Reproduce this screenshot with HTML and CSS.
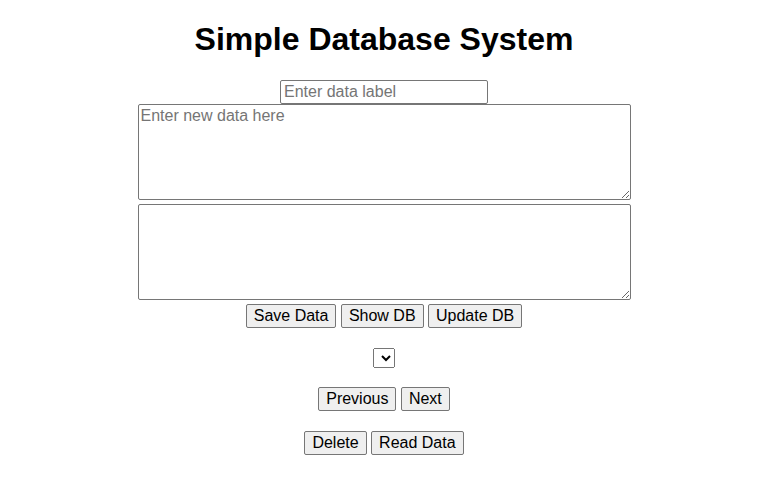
FILE: index.html
```html
<!DOCTYPE html>
<html lang="en">
<head>
<meta charset="utf-8">
<title>Simple Database System</title>
<link rel="stylesheet" href="styles.css">
</head>
<body>
<main class="app">
  <h1 class="title">Simple Database System</h1>
  <input class="label-input" type="text" placeholder="Enter data label">
  <textarea class="data-area" placeholder="Enter new data here"></textarea>
  <textarea class="data-area second"></textarea>
  <div class="row row-actions">
    <button class="btn">Save Data</button>
    <button class="btn">Show DB</button>
    <button class="btn">Update DB</button>
  </div>
  <select class="picker"></select>
  <div class="row row-nav">
    <button class="btn">Previous</button>
    <button class="btn">Next</button>
  </div>
  <div class="row row-edit">
    <button class="btn">Delete</button>
    <button class="btn">Read Data</button>
  </div>
</main>
</body>
</html>
```
FILE: styles.css
```css
html, body {
  margin: 0;
  padding: 0;
  background: #ffffff;
}
body {
  font-family: "Liberation Sans", Arial, sans-serif;
  color: #000000;
}
.app {
  display: flex;
  flex-direction: column;
  align-items: center;
}
.title {
  margin: 21px 0 0;
  font-size: 32px;
  font-weight: bold;
  line-height: 37px;
}
.label-input {
  margin-top: 22px;
  box-sizing: border-box;
  width: 208px;
  height: 24px;
  padding: 1px 3px;
  border: 1px solid #767676;
  border-radius: 2px;
  font-family: "Liberation Sans", Arial, sans-serif;
  font-size: 16px;
}
.label-input::placeholder,
.data-area::placeholder {
  color: #757575;
}
.data-area {
  box-sizing: border-box;
  width: 493px;
  height: 96px;
  margin: 0;
  padding: 2px;
  border: 1px solid #767676;
  border-radius: 2px;
  font-family: "Liberation Sans", Arial, sans-serif;
  font-size: 16px;
}
.data-area.second {
  margin-top: 4px;
}
.row {
  display: flex;
  justify-content: center;
  gap: 4.45px;
}
.row-actions {
  margin-top: 4px;
}
.row-nav {
  margin-top: 19px;
}
.row-edit {
  margin-top: 20px;
}
.btn {
  box-sizing: border-box;
  height: 24px;
  padding: 1px 7px;
  border: 1px solid #767676;
  border-radius: 2px;
  background: #efefef;
  color: #000000;
  font-family: "Liberation Sans", Arial, sans-serif;
  font-size: 16px;
  line-height: 18px;
}
.picker {
  margin-top: 20px;
  box-sizing: border-box;
  width: 22px;
  height: 20px;
  font-family: "Liberation Sans", Arial, sans-serif;
  font-size: 16px;
}
```
